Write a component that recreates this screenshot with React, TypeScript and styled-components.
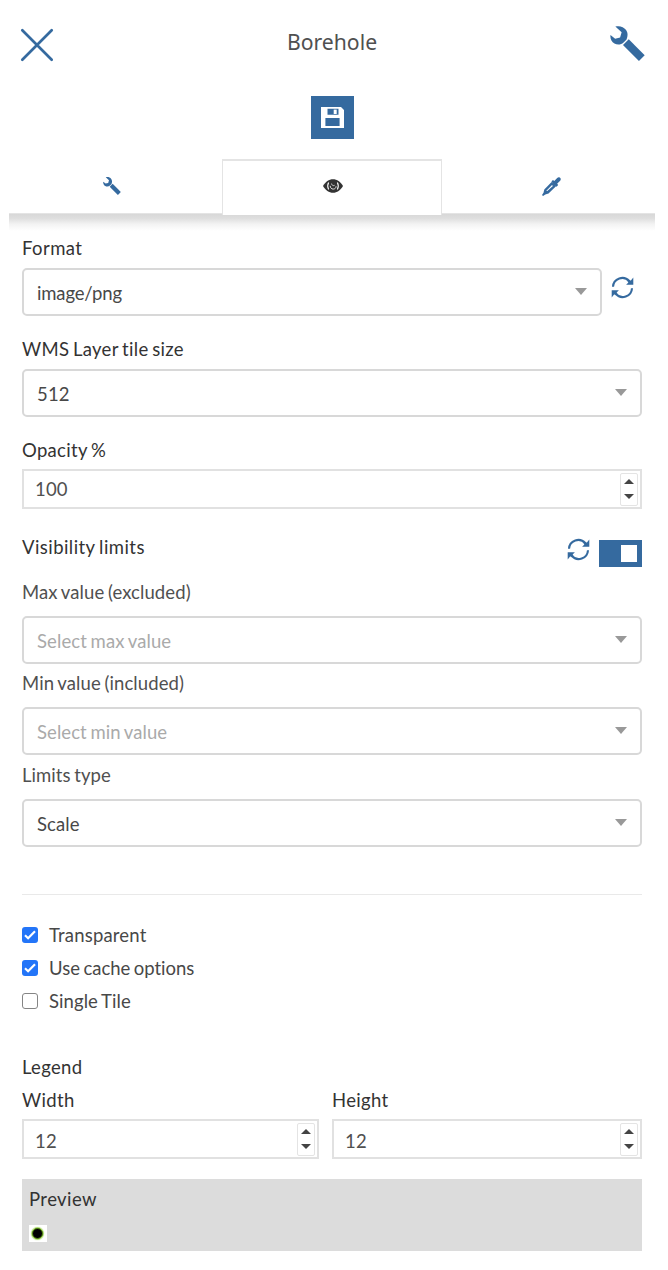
import React, { useState } from "react";
import styled, { createGlobalStyle } from "styled-components";

const BLUE = "#356a9f";

const GlobalStyle = createGlobalStyle`
  * { box-sizing: border-box; }
  body {
    margin: 0;
    background: #fff;
    color: #333;
    font-family: Lato, "Liberation Sans", sans-serif;
    font-size: 18.5px;
    font-variant-ligatures: none;
    word-spacing: -1.2px;
  }
  svg { display: block; flex: none; }
`;

const Panel = styled.main`
  width: 668px;
  height: 1270px;
  background: #fff;
  overflow: hidden;
`;

const Header = styled.header`
  display: grid;
  grid-template-columns: 36px 1fr 36px;
  height: 96px;
  padding: 26px 23px 0 19px;
`;

const Title = styled.h1`
  margin: 0;
  color: #505050;
  font: 400 21.2px/32px "Noto Sans", sans-serif;
  text-align: center;
`;

const IconButton = styled.button<{ $drop?: number }>`
  display: flex;
  align-items: flex-start;
  justify-content: center;
  padding: ${(p) => p.$drop ?? 0}px 0 0;
  border: 0;
  background: none;
  color: ${BLUE};
`;

const Actions = styled.div`
  display: flex;
  justify-content: center;
  padding-right: 4px;
  height: 63px;
`;

const SaveButton = styled.button`
  display: flex;
  align-items: center;
  justify-content: center;
  width: 43px;
  height: 43px;
  padding: 0;
  border: 0;
  background: ${BLUE};
  color: #fff;
`;

const Tabs = styled.nav`
  display: grid;
  grid-template-columns: 213px 220px 213px;
  width: 646px;
  height: 56px;
  margin-left: 9px;
`;

const Tab = styled.button<{ $active?: boolean; $shift?: number }>`
  display: flex;
  align-items: center;
  justify-content: center;
  height: ${(p) => (p.$active ? 56 : 55)}px;
  padding: ${(p) => (p.$active ? "0 0 4px 2px" : "0")};
  border: solid #e4e4e4;
  border-width: ${(p) => (p.$active ? "2px 1px 0" : "0 0 1px")};
  background: #fff;
  color: ${(p) => (p.$active ? "#333" : BLUE)};

  svg { margin-left: ${(p) => p.$shift ?? 0}px; }
`;

const TabShadow = styled.div`
  width: 646px;
  height: 17px;
  margin: -1px 0 0 9px;
  background: linear-gradient(#d8d8d8, #dedede 25%, #f3f3f3 60%, #fff);
`;

const Form = styled.form`
  display: flex;
  flex-direction: column;
  padding: 4px 26px 0 22px;
`;

const Field = styled.div<{ $gap?: number; $after?: number }>`
  display: flex;
  flex-direction: column;
  gap: ${(p) => p.$gap ?? 9}px;
  margin-bottom: ${(p) => p.$after ?? 0}px;
`;

const Label = styled.label<{ $spacing?: number; $light?: boolean }>`
  height: 24px;
  line-height: 26px;
  color: ${(p) => (p.$light ? "#505050" : "#333")};
  letter-spacing: ${(p) => p.$spacing ?? 0.5}px;
  white-space: nowrap;
`;

const ControlRow = styled.div`
  display: flex;
  gap: 9px;
  padding-right: 8px;
`;

const SelectBox = styled.div`
  display: flex;
  flex: 1 1 48px;
  align-items: center;
  justify-content: space-between;
  height: 48px;
  padding: 0 13px;
  border: 2px solid #d8d8d8;
  border-radius: 5px;
  background: #fff;
`;

const SelectValue = styled.span<{ $spacing: number; $placeholder?: boolean }>`
  padding-top: 2px;
  line-height: 24px;
  color: ${(p) => (p.$placeholder ? "#aaa" : "#484848")};
  letter-spacing: ${(p) => p.$spacing}px;
`;

const Caret = styled.i<{ $up?: boolean; $small?: boolean }>`
  width: 0;
  height: 0;
  margin-top: ${(p) => (p.$small ? 0 : -2)}px;
  border: solid transparent;
  border-width: 0 ${(p) => (p.$small ? 5.5 : 6.5)}px;
  ${(p) => (p.$up ? "border-bottom" : "border-top")}: ${(p) => (p.$small ? "5px solid #444" : "7px solid #999")};
`;

const NumberBox = styled.div<{ $low?: boolean }>`
  display: flex;
  justify-content: space-between;
  height: 40px;
  padding: ${(p) => (p.$low ? 8 : 6)}px 2px 0 11px;
  border: 2px solid #e1e1e1;
  color: #505050;
  line-height: 24px;
  letter-spacing: 0.2px;
`;

const Stepper = styled.div<{ $low?: boolean }>`
  display: flex;
  flex-direction: column;
  align-items: center;
  gap: 10px;
  width: 18px;
  height: 33px;
  margin-top: ${(p) => (p.$low ? -6 : -4)}px;
  padding-top: 5px;
  border: 1px solid #e4e4e4;
  border-radius: 2px;
`;

const VisibilityHeader = styled.div`
  display: flex;
  justify-content: space-between;
  height: 45px;
`;

const VisibilityTools = styled.div`
  display: flex;
  gap: 9px;
  padding-top: 4px;
`;

const Switch = styled.button<{ $on: boolean }>`
  display: flex;
  justify-content: ${(p) => (p.$on ? "flex-end" : "flex-start")};
  width: 43px;
  height: 27px;
  margin-top: 2px;
  padding: 5px;
  border: 0;
  background: ${(p) => (p.$on ? BLUE : "#ccc")};
`;

const SwitchKnob = styled.span`
  width: 16px;
  height: 17px;
  background: #fff;
`;

const Divider = styled.hr`
  width: 100%;
  height: 1px;
  margin: 47px 0 23px;
  border: 0;
  background: #e9e9e9;
`;

const CheckRow = styled.label`
  display: flex;
  align-items: center;
  gap: 11px;
  height: 33px;
`;

const CheckBox = styled.span<{ $checked: boolean }>`
  display: flex;
  align-items: center;
  justify-content: center;
  width: 16px;
  height: 16px;
  border: ${(p) => (p.$checked ? "0" : "1.5px solid #858585")};
  border-radius: 3px;
  background: ${(p) => (p.$checked ? "#2375f8" : "#fff")};
`;

const CheckText = styled.span<{ $spacing: number }>`
  padding-top: 1px;
  line-height: 24px;
  color: #484848;
  letter-spacing: ${(p) => p.$spacing}px;
`;

const LegendTitle = styled(Label)`
  margin: 37px 0 9px;
`;

const LegendGrid = styled.div`
  display: grid;
  grid-template-columns: 297px 310px;
  gap: 13px;
  margin-bottom: 20px;
`;

const Preview = styled.section`
  display: flex;
  flex-direction: column;
  gap: 15px;
  height: 72px;
  padding: 7px;
  background: #dcdcdc;
`;

const Marker = styled.span`
  display: flex;
  align-items: center;
  width: 18px;
  height: 17px;
  padding-left: 3px;
  background: #fff;
`;

const MarkerDot = styled.i`
  width: 11px;
  height: 11px;
  border: 1px solid #4f8010;
  border-radius: 50%;
  background: #000;
  box-shadow: 0 0 1px 1px #a4d860;
`;

const CloseIcon = () => (
  <svg width="34" height="36" viewBox="0 0 34 36" stroke="currentColor" strokeWidth="2.7" strokeLinecap="round">
    <path d="M2.3 4.3 31.7 33.7M31.7 4.3 2.3 33.7" />
  </svg>
);

const WrenchIcon = ({ size }: { size: number }) => (
  <svg width={size} height={size} viewBox="0 0 34 34" fill="currentColor">
    <path d="M5.200.6C8.900-.6 13.200.5 15.600 3.800c1.900 2.700 1.800 5.800.5 9.200l-2.900 3c-2.600 2.400-6 2.700-8.900 1C1.400 15.200-.1 12 .5 8.800L5 12.500l4.800-1.300 1.500-5.100z" />
    <path d="m18.200 12.800 15.500 15.500-5.600 5.600-15.500-15.500z" />
  </svg>
);

const FloppyIcon = () => (
  <svg width="23" height="21" viewBox="0 0 23 21">
    <path fill="currentColor" fillRule="evenodd" d="M0 0h20l3 3v18H0zm6.500 1.800v6h11v-6zM4.400 11v8h14.200v-8z" />
    <path fill="currentColor" d="M12.700 2.600h3v4.400h-3z" />
  </svg>
);

const EyeIcon = () => (
  <svg width="20" height="14" viewBox="0 0 20 14">
    <path fill="currentColor" d="M0 7C2.400 2.700 6 .2 10 .2s7.600 2.500 10 6.800c-2.400 4.300-6 6.800-10 6.800S2.400 11.300 0 7z" />
    <path d="M5.600 3.600C4.500 5.700 4.500 8.300 5.600 10.400M14.400 3.600c1.100 2.100 1.100 4.700 0 6.800" fill="none" stroke="#fff" strokeWidth="1.100" />
    <path d="M7.200 6.800c0 2 1.200 3.300 3 3.300 1.700 0 2.900-1.200 2.900-2.900M8.600 4.600c.3 1.800 1.500 2.500 3 1.700" fill="none" stroke="#ddd" strokeWidth="1" />
  </svg>
);

const DropperIcon = () => (
  <svg width="19" height="19" viewBox="0 0 19 19">
    <path fill="currentColor" d="M9.500 4.200 11 2.900l1.300 1L15.200 1c1.100-1.100 2.800-.8 3.300.3.500 1 .2 1.900-.6 2.700l-2.800 2.800 1.100 1.300-1.700 1.700-1.700-1.300-2.100-1.900z" />
    <path fill="currentColor" fillRule="evenodd" d="m9.600 5 4.400 4.300-7.500 7.300-3.200.8L1 19l-1-.9 1.500-2.400.8-3.300zM10 8.100l-5.400 5.300-.2.700.9-.1 5.600-5z" />
  </svg>
);

const RefreshIcon = () => (
  <svg width="23" height="23" viewBox="0 0 23 23">
    <path d="M2 10.800A9.300 9.300 0 0 1 18.300 5.200M21 12.200A9.300 9.300 0 0 1 4.700 17.800" fill="none" stroke="currentColor" strokeWidth="2.100" />
    <path d="M22.300 1.500v7.200h-7.200l2.300-2.200-.9-1.100 2.300-1.700.9 1zM.7 21.500v-7.200h7.200l-2.300 2.200.9 1.100-2.300 1.700-.9-1z" fill="currentColor" />
  </svg>
);

const CheckIcon = () => (
  <svg width="12" height="10" viewBox="0 0 12 10" fill="none" stroke="#fff" strokeWidth="2.200">
    <path d="m1 5.200 3.100 3L11 1.200" />
  </svg>
);

interface SelectProps {
  value: string;
  spacing: number;
  placeholder?: boolean;
}

const Select = ({ value, spacing, placeholder }: SelectProps) => (
  <SelectBox>
    <SelectValue $spacing={spacing} $placeholder={placeholder}>{value}</SelectValue>
    <Caret />
  </SelectBox>
);

const NumberInput = ({ value, low }: { value: number; low?: boolean }) => (
  <NumberBox $low={low}>
    {value}
    <Stepper $low={low}>
      <Caret $small $up />
      <Caret $small />
    </Stepper>
  </NumberBox>
);

const options = [
  { name: "Transparent", spacing: 0.18, on: true },
  { name: "Use cache options", spacing: -0.02, on: true },
  { name: "Single Tile", spacing: 0.08, on: false },
];

export default function App() {
  const [limited, setLimited] = useState(true);
  return (
    <>
      <GlobalStyle />
      <Panel>
        <Header>
          <IconButton aria-label="Close"><CloseIcon /></IconButton>
          <Title>Borehole</Title>
          <IconButton aria-label="Settings"><WrenchIcon size={35} /></IconButton>
        </Header>
        <Actions>
          <SaveButton aria-label="Save"><FloppyIcon /></SaveButton>
        </Actions>
        <Tabs>
          <Tab aria-label="General" $shift={-8}><WrenchIcon size={18} /></Tab>
          <Tab aria-label="Display" $active><EyeIcon /></Tab>
          <Tab aria-label="Style" $shift={6}><DropperIcon /></Tab>
        </Tabs>
        <TabShadow />
        <Form>
          <Field $after={20}>
            <Label $spacing={0.42}>Format</Label>
            <ControlRow>
              <Select value="image/png" spacing={-0.15} />
              <IconButton type="button" aria-label="Refresh formats" $drop={8}><RefreshIcon /></IconButton>
            </ControlRow>
          </Field>
          <Field $after={20}>
            <Label $spacing={0.28}>WMS Layer tile size</Label>
            <Select value="512" spacing={0.15} />
          </Field>
          <Field $gap={8} $after={25}>
            <Label $spacing={0.3}>Opacity %</Label>
            <NumberInput value={100} />
          </Field>
          <VisibilityHeader>
            <Label $spacing={0.44}>Visibility limits</Label>
            <VisibilityTools>
              <IconButton type="button" aria-label="Refresh limits"><RefreshIcon /></IconButton>
              <Switch type="button" aria-label="Limit visibility" $on={limited} onClick={() => setLimited(!limited)}>
                <SwitchKnob />
              </Switch>
            </VisibilityTools>
          </VisibilityHeader>
          <Field $gap={13} $after={6}>
            <Label $light $spacing={0.1}>Max value (excluded)</Label>
            <Select value="Select max value" spacing={0.1} placeholder />
          </Field>
          <Field $gap={13} $after={7}>
            <Label $light $spacing={0.1}>Min value (included)</Label>
            <Select value="Select min value" spacing={0.08} placeholder />
          </Field>
          <Field $gap={13}>
            <Label $light $spacing={0.06}>Limits type</Label>
            <Select value="Scale" spacing={0.08} />
          </Field>
          <Divider />
          {options.map((o) => (
            <CheckRow key={o.name}>
              <CheckBox $checked={o.on}>{o.on && <CheckIcon />}</CheckBox>
              <CheckText $spacing={o.spacing}>{o.name}</CheckText>
            </CheckRow>
          ))}
          <LegendTitle $spacing={0.3}>Legend</LegendTitle>
          <LegendGrid>
            <Field $gap={8}>
              <Label $spacing={0.4}>Width</Label>
              <NumberInput value={12} low />
            </Field>
            <Field $gap={8}>
              <Label $spacing={0.35}>Height</Label>
              <NumberInput value={12} low />
            </Field>
          </LegendGrid>
          <Preview>
            <Label $spacing={0.42}>Preview</Label>
            <Marker><MarkerDot /></Marker>
          </Preview>
        </Form>
      </Panel>
    </>
  );
}
